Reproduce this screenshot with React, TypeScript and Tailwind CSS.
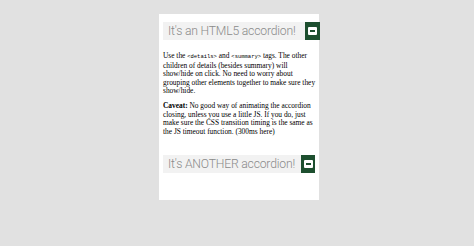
import React from 'react';

function MinusButton({ className }: { className?: string }) {
  return (
    <span className={`flex items-center justify-center bg-[#1d4f2f] ${className ?? ''}`}>
      <span className="flex h-[8px] w-[9px] items-center justify-center rounded-[1px] bg-white">
        <span className="h-[2px] w-[5px] bg-[#1d4f2f]" />
      </span>
    </span>
  );
}

const headingFont = { fontFamily: 'Roboto, sans-serif' };

export default function App() {
  return (
    <div className="min-h-[246px] w-full bg-[#e1e1e1] pt-[14px]" style={{ fontFamily: '"Liberation Serif", serif' }}>
      <div className="ml-[159px] flex h-[186px] w-[160px] flex-col bg-white pl-[4px] pt-[8px]">
        <details open className="mr-[-1px]">
          <summary className="flex h-[18px] list-none items-stretch bg-[#f2f2f2]">
            <span
              className="flex-1 whitespace-nowrap pl-[5px] text-[12.2px] leading-[18px] font-light tracking-[-0.2px] text-[#8a8a8a]"
              style={headingFont}
            >
              It's an HTML5 accordion!
            </span>
            <MinusButton className="w-[15px]" />
          </summary>
          <div className="pr-0 pt-[12px] text-[7.4px] leading-[8.6px] whitespace-nowrap text-black">
            <p>
              Use the <code className="font-['Liberation_Mono'] text-[5.5px]">&lt;details&gt;</code> and{' '}
              <code className="font-['Liberation_Mono'] text-[5.5px]">&lt;summary&gt;</code> tags. The other
              <br />
              children of details (besides summary) will
              <br />
              show/hide on click. No need to worry about
              <br />
              grouping other elements together to make sure they
              <br />
              show/hide.
            </p>
            <p className="mt-[6px]">
              <b>Caveat:</b> No good way of animating the accordion
              <br />
              closing, unless you use a little JS. If you do, just
              <br />
              make sure the CSS transition timing is the same as
              <br />
              the JS timeout function. (300ms here)
            </p>
          </div>
        </details>
        <details className="mt-[19px] mr-[4px]">
          <summary className="flex h-[18px] list-none items-stretch bg-[#f2f2f2]">
            <span
              className="flex-1 whitespace-nowrap pl-[5px] text-[12.2px] leading-[18px] font-light tracking-[-0.2px] text-[#8a8a8a]"
              style={headingFont}
            >
              It's ANOTHER accordion!
            </span>
            <MinusButton className="w-[14px]" />
          </summary>
        </details>
      </div>
    </div>
  );
}
